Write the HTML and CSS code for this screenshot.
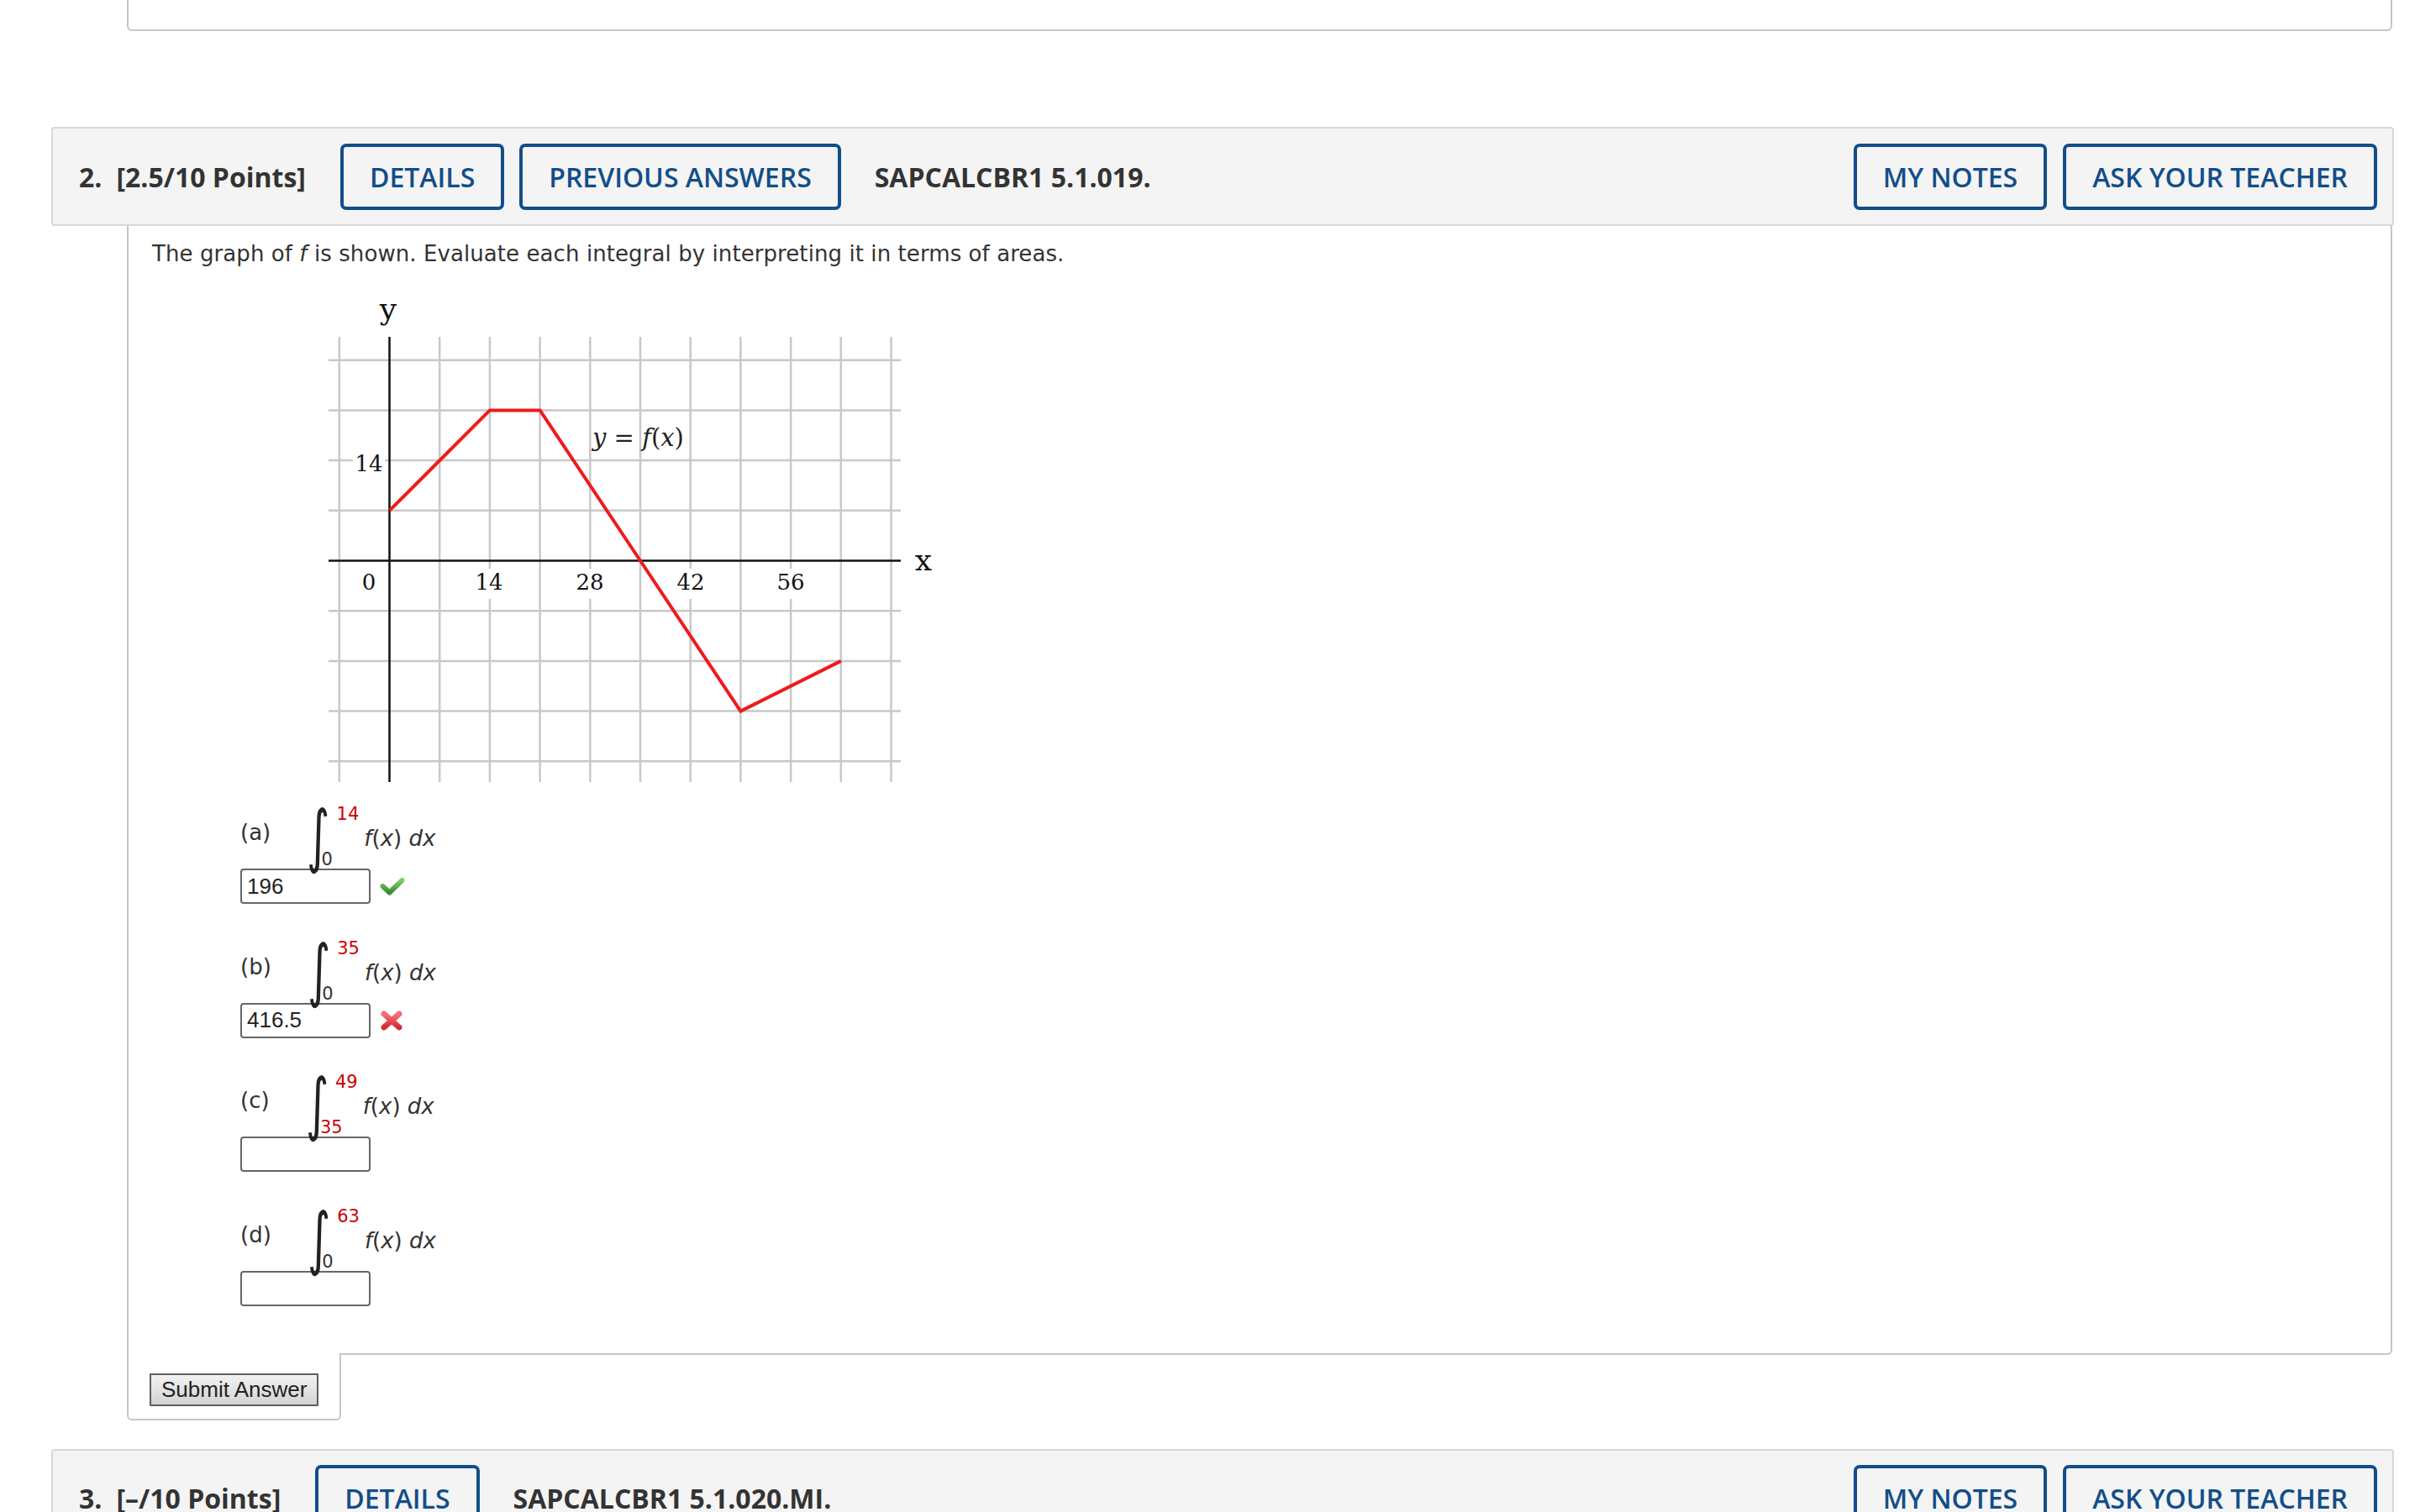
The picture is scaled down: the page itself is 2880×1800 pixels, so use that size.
FILE: index.html
```html
<!DOCTYPE html>
<html lang="en">
<head>
    <meta charset="UTF-8">
    <meta name="viewport" content="width=device-width, initial-scale=1.0">
    <title>Assignment</title>
    <link rel="stylesheet" href="styles.css">
</head>
<body>
    <div class="prev-box"></div>

    <div class="question">
        <div class="q-head">
            <span class="q-num">2.</span>
            <span class="q-points">[2.5/10 Points]</span>
            <button class="btn">DETAILS</button>
            <button class="btn">PREVIOUS ANSWERS</button>
            <span class="q-code">SAPCALCBR1 5.1.019.</span>
            <button class="btn btn-push">MY NOTES</button>
            <button class="btn btn-last">ASK YOUR TEACHER</button>
        </div>

        <div class="q-body">
            <p class="prompt">The graph of <i>f</i> is shown. Evaluate each integral by interpreting it in terms of areas.</p>

            <svg class="graph" width="730" height="596" viewBox="0 -15 730 596">
                <g class="grid">
                    <line x1="23.8" y1="51" x2="23.8" y2="581"/>
                    <line x1="143.2" y1="51" x2="143.2" y2="581"/>
                    <line x1="202.9" y1="51" x2="202.9" y2="581"/>
                    <line x1="262.6" y1="51" x2="262.6" y2="581"/>
                    <line x1="322.3" y1="51" x2="322.3" y2="581"/>
                    <line x1="382" y1="51" x2="382" y2="581"/>
                    <line x1="441.7" y1="51" x2="441.7" y2="581"/>
                    <line x1="501.4" y1="51" x2="501.4" y2="581"/>
                    <line x1="561.1" y1="51" x2="561.1" y2="581"/>
                    <line x1="620.8" y1="51" x2="620.8" y2="581"/>
                    <line x1="680.5" y1="51" x2="680.5" y2="581"/>

                    <line x1="11" y1="78.7" x2="692" y2="78.7"/>
                    <line x1="11" y1="138.4" x2="692" y2="138.4"/>
                    <line x1="11" y1="198.1" x2="692" y2="198.1"/>
                    <line x1="11" y1="257.8" x2="692" y2="257.8"/>
                    <line x1="11" y1="377.2" x2="692" y2="377.2"/>
                    <line x1="11" y1="436.9" x2="692" y2="436.9"/>
                    <line x1="11" y1="496.6" x2="692" y2="496.6"/>
                    <line x1="11" y1="556.3" x2="692" y2="556.3"/>
                </g>

                <!-- white patches so tick labels sit on clean paper -->
                <g class="label-bg">
                    <rect x="40" y="186" width="38" height="28"/>
                    <rect x="184" y="327" width="38" height="36"/>
                    <rect x="303" y="327" width="38" height="36"/>
                    <rect x="423" y="327" width="38" height="36"/>
                    <rect x="542" y="327" width="38" height="36"/>
                </g>

                <g class="axes">
                    <line x1="11" y1="317.5" x2="692" y2="317.5"/>
                    <line x1="83.5" y1="51" x2="83.5" y2="581"/>
                </g>

                <polyline class="curve" points="83.5,257.8 202.9,138.4 262.6,138.4 382,317.5 501.4,496.6 620.8,436.9"/>

                <g class="ticks">
                    <text x="59" y="351.6">0</text>
                    <text x="202" y="351.6">14</text>
                    <text x="322" y="351.6">28</text>
                    <text x="442" y="351.6">42</text>
                    <text x="561" y="351.6">56</text>
                    <text x="59" y="211">14</text>
                </g>
                <text class="axis-name" x="82" y="30">y</text>
                <text class="axis-name" x="719" y="329">x</text>
                <text class="fn-label" x="325" y="181"><tspan class="it">y</tspan> = <tspan class="it">f</tspan>(<tspan class="it">x</tspan>)</text>
            </svg>

            <div class="parts">
                <div class="part">
                    <div class="expr">
                        <span class="tag">(a)</span>
                        <span class="integral">
                            <span class="int-sign">∫</span>
                            <span class="limits"><span class="hi">14</span><span class="lo">0</span></span>
                        </span>
                        <span class="integrand"><i>f</i>(<i>x</i>) <i>dx</i></span>
                    </div>
                    <div class="answer">
                        <input class="ans" type="text" value="196">
                        <svg class="mark" width="30" height="22" viewBox="0 0 30 22">
                            <defs>
                                <linearGradient id="okGrad" x1="0" y1="0" x2="0" y2="1">
                                    <stop offset="0" stop-color="#7fcf6b"/>
                                    <stop offset="1" stop-color="#3a8c30"/>
                                </linearGradient>
                            </defs>
                            <path d="M3.5 11 L11.5 18.5 L26.5 4" fill="none" stroke="url(#okGrad)" stroke-width="6" stroke-linecap="round" stroke-linejoin="round"/>
                        </svg>
                    </div>
                </div>

                <div class="part">
                    <div class="expr">
                        <span class="tag">(b)</span>
                        <span class="integral">
                            <span class="int-sign">∫</span>
                            <span class="limits"><span class="hi">35</span><span class="lo">0</span></span>
                        </span>
                        <span class="integrand"><i>f</i>(<i>x</i>) <i>dx</i></span>
                    </div>
                    <div class="answer">
                        <input class="ans" type="text" value="416.5">
                        <svg class="mark" width="28" height="26" viewBox="0 0 28 26">
                            <defs>
                                <linearGradient id="badGrad" x1="0" y1="0" x2="0" y2="1">
                                    <stop offset="0" stop-color="#f4717a"/>
                                    <stop offset="1" stop-color="#d62b36"/>
                                </linearGradient>
                            </defs>
                            <path d="M5 5 L23 21 M23 5 L5 21" fill="none" stroke="url(#badGrad)" stroke-width="7" stroke-linecap="round"/>
                        </svg>
                    </div>
                </div>

                <div class="part">
                    <div class="expr">
                        <span class="tag">(c)</span>
                        <span class="integral">
                            <span class="int-sign">∫</span>
                            <span class="limits"><span class="hi">49</span><span class="lo red">35</span></span>
                        </span>
                        <span class="integrand"><i>f</i>(<i>x</i>) <i>dx</i></span>
                    </div>
                    <div class="answer">
                        <input class="ans" type="text" value="">
                    </div>
                </div>

                <div class="part">
                    <div class="expr">
                        <span class="tag">(d)</span>
                        <span class="integral">
                            <span class="int-sign">∫</span>
                            <span class="limits"><span class="hi">63</span><span class="lo">0</span></span>
                        </span>
                        <span class="integrand"><i>f</i>(<i>x</i>) <i>dx</i></span>
                    </div>
                    <div class="answer">
                        <input class="ans" type="text" value="">
                    </div>
                </div>
            </div>
        </div>

        <div class="submit-tab">
            <button class="submit">Submit Answer</button>
        </div>
    </div>

    <div class="question next">
        <div class="q-head">
            <span class="q-num">3.</span>
            <span class="q-points">[–/10 Points]</span>
            <button class="btn">DETAILS</button>
            <span class="q-code">SAPCALCBR1 5.1.020.MI.</span>
            <button class="btn btn-push">MY NOTES</button>
            <button class="btn btn-last">ASK YOUR TEACHER</button>
        </div>
    </div>
</body>
</html>
```

FILE: styles.css
```css
html,
body {
    margin: 0;
    overflow: hidden;
    background-color: #fff;
}

body {
    font-family: "DejaVu Sans", Verdana, sans-serif;
    color: #333;
}

.prev-box {
    margin: 0 33px 0 151px;
    height: 35px;
    border: 2px solid #c6c6c6;
    border-top: none;
    border-radius: 0 0 6px 6px;
}

.question {
    margin-top: 114px;
}

.question.next {
    margin-top: 34px;
}

/* question header bar */
.q-head {
    margin: 0 31px 0 61px;
    height: 118px;
    box-sizing: border-box;
    border: 2px solid #d8d8d8;
    border-radius: 4px;
    background-color: #f4f4f4;
    display: flex;
    align-items: center;
    padding: 0 18px 0 31px;
    font-family: "Open Sans", sans-serif;
    font-size: 32px;
    color: #333;
}

.q-num {
    font-weight: 700;
    margin-right: 17px;
}

.q-points {
    font-weight: 700;
    margin-right: 41px;
}

.q-code {
    font-weight: 700;
    margin-left: 22px;
}

.btn {
    height: 79px;
    box-sizing: border-box;
    border: 4px solid #124e89;
    border-radius: 7px;
    padding: 0 31px;
    margin-right: 18px;
    background: transparent;
    color: #124e89;
    font-family: "Open Sans", sans-serif;
    font-size: 32px;
    font-weight: 600;
    display: flex;
    align-items: center;
}

.btn-push {
    margin-left: auto;
    margin-right: 19px;
}

.btn-last {
    margin-right: 0;
}

/* question body */
.q-body {
    margin: 0 33px 0 151px;
    border: 2px solid #c6c6c6;
    border-top: none;
    border-radius: 0 0 6px 0;
    padding: 14px 28px 56px;
}

.prompt {
    margin: 0;
    font-size: 26px;
    line-height: 38px;
    letter-spacing: 0.08px;
}

.graph {
    display: block;
    margin: 14px 0 0 199px;
}

.graph .grid line {
    stroke: #c8c8c8;
    stroke-width: 2.5;
}

.graph .label-bg rect {
    fill: #fff;
}

.graph .axes line {
    stroke: #111;
    stroke-width: 2.5;
}

.graph .curve {
    fill: none;
    stroke: #ee1b1b;
    stroke-width: 4;
    stroke-linejoin: miter;
}

.graph .ticks text {
    font-family: "DejaVu Serif", serif;
    font-size: 26px;
    fill: #111;
    text-anchor: middle;
}

.graph .axis-name {
    font-family: "DejaVu Serif", serif;
    font-size: 36px;
    fill: #111;
    text-anchor: middle;
}

.graph .fn-label {
    font-family: "DejaVu Serif", serif;
    font-size: 29px;
    fill: #222;
}

.graph .fn-label .it {
    font-style: italic;
}

/* integral parts */
.parts {
    margin-left: 105px;
}

.part {
    margin-top: 41.5px;
}

.part:first-child {
    margin-top: 27px;
}

.expr {
    display: flex;
    align-items: flex-start;
    height: 76px;
    font-size: 26px;
}

.tag {
    margin-top: 18px;
    line-height: 30px;
}

.integral {
    display: flex;
    margin-left: 40px;
    height: 76px;
}

.int-sign {
    font-size: 64px;
    line-height: 76px;
    color: #222;
    transform: scale(0.82, 1.28);
    transform-origin: 50% 56%;
}

.limits {
    display: flex;
    flex-direction: column;
    justify-content: space-between;
    height: 76px;
    font-size: 21px;
    line-height: 22px;
}

.hi {
    color: #cc0000;
    margin-left: 5px;
}

.lo {
    margin-left: -13px;
    color: #333;
}

.lo.red {
    color: #cc0000;
}

.integrand {
    margin-top: 25px;
    margin-left: 6px;
    line-height: 30px;
}

.answer {
    display: flex;
    align-items: center;
    height: 42px;
}

.ans {
    width: 155px;
    height: 42px;
    box-sizing: border-box;
    margin: 0;
    border: 2px solid #666;
    border-radius: 4px;
    padding: 0 6px;
    font-family: "Liberation Sans", Arial, sans-serif;
    font-size: 26px;
    color: #222;
    background: #fff;
}

.mark {
    margin-left: 11px;
}

/* submit button hangs off the lower left corner */
.submit-tab {
    margin: -2px 0 0 151px;
    width: 255px;
    box-sizing: border-box;
    border: 2px solid #c6c6c6;
    border-top: none;
    border-radius: 0 0 6px 6px;
    background-color: #fff;
    padding: 24px 0 15px 25px;
}

.submit {
    height: 39px;
    box-sizing: border-box;
    border: 2px solid #5e5e5e;
    border-radius: 1px;
    padding: 0 12px;
    background: linear-gradient(#f2f2f2, #d3d3d3);
    font-family: "Liberation Sans", Arial, sans-serif;
    font-size: 26px;
    color: #222;
    display: block;
}
```
